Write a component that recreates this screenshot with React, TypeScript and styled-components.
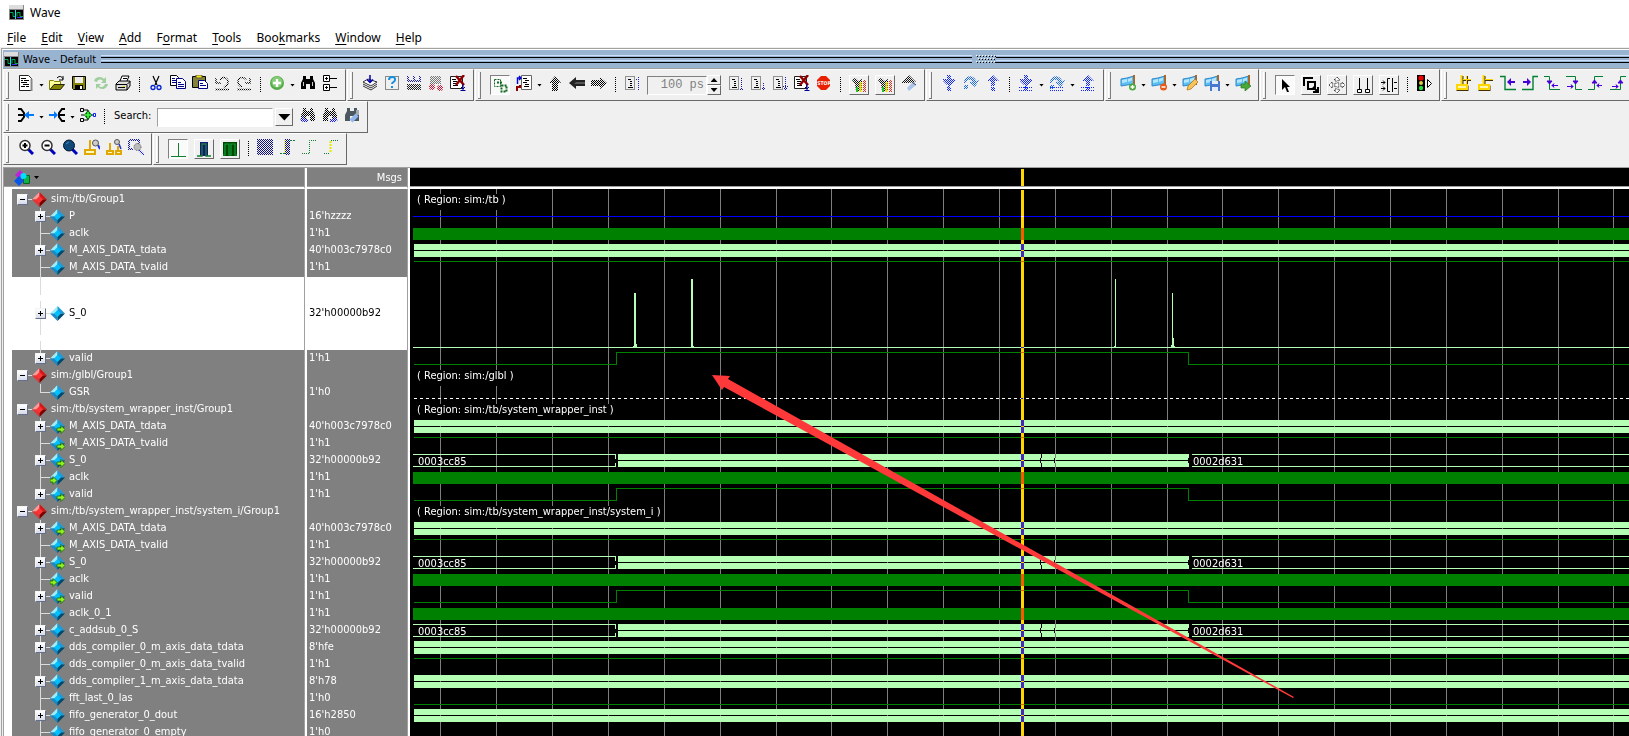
import React from 'react';
import styled, { createGlobalStyle, css } from 'styled-components';

/* ---------- palette ---------- */
const C = {
  face: '#f0f0f0',
  line: '#a0a0a0',
  shade: '#696969',
  caption: '#99b4d1',
  pane: '#808080',
  grid: '#7d7d7d',
  lit: '#b4ffb4',
  green: '#008000',
};
const UI = '"DejaVu Sans Condensed", "Noto Sans", sans-serif';
const MENU = '"Noto Sans", "Noto Sans CJK SC", sans-serif';

const Global = createGlobalStyle`
  *, *::before, *::after { box-sizing: border-box; }
  body { margin: 0; background: ${C.face}; font: 11px/17px ${UI}; color: #000; }
  button, input { font: inherit; color: inherit; margin: 0; padding: 0; border: 0; border-radius: 0; background: none; }
  svg { display: block; flex: none; }
`;

/* ---------- window frame ---------- */
const Window = styled.main`
  display: flex;
  flex-direction: column;
  height: 100vh;
  overflow: hidden;
`;
const TitleBar = styled.header`
  display: flex;
  align-items: center;
  gap: 6px;
  height: 25px;
  padding-left: 9px;
  background: #fff;
  font: 12px/17px ${MENU};
`;
const WindowTitle = styled.h1`
  margin: 0;
  font: inherit;
`;
const MenuBar = styled.nav`
  display: flex;
  gap: 15px;
  height: 23px;
  padding: 4px 7px 0;
  background: #fff;
  border-bottom: 1px solid ${C.face};
  font: 12px/17px ${MENU};
`;
const MenuItem = styled.button`
  height: 17px;
  white-space: nowrap;
  u { text-underline-offset: 2px; }
`;
const Frame = styled.section`
  display: flex;
  flex-direction: column;
  flex: 1;
  min-height: 0;
  margin-left: 1px;
  border: solid ${C.line};
  border-width: 1px 0 0 1px;
`;
const Caption = styled.div`
  display: flex;
  align-items: center;
  gap: 4px;
  flex: none;
  height: 20px;
  margin-left: 1px;
  padding-left: 1px;
  background: ${C.caption};
  border-top: 1px solid #fff;
  border-bottom: 1px solid ${C.line};
`;
const CaptionTitle = styled.h2`
  margin: 0;
  font: inherit;
  white-space: nowrap;
`;
const Rule = styled.span<{ $grow: number }>`
  flex: ${p => p.$grow} 1 0;
  height: 8px;
  margin-left: ${p => (p.$grow > 10 ? 1 : -4)}px;
  background: linear-gradient(
    #cdf 1px, transparent 1px 2px, #000 2px 3px, transparent 3px 5px,
    #cdf 5px 6px, transparent 6px 7px, #000 7px 8px
  );
`;

/* ---------- tool bars ---------- */
const ToolRow = styled.div`
  display: flex;
  flex: none;
  gap: 1px;
  height: 32px;
  margin-left: 1px;
  overflow: hidden;
`;
const Group = styled.div`
  display: flex;
  flex: none;
  align-items: center;
  height: 32px;
  padding-right: 4px;
  border: 1px solid ${C.shade};
  border-top-color: #fff;
  border-left-color: #fff;
  &::before {
    content: '';
    width: 3px;
    height: 27px;
    margin: 0 6px 0 2px;
    border: solid #7c7c7c;
    border-width: 0 1px 1px 0;
    box-shadow: inset 1px 0 #fff;
  }
`;
const Tool = styled.button`
  display: flex;
  justify-content: center;
  width: 22px;
  height: 20px;
`;
const Key = styled.button<{ $down?: boolean }>`
  display: flex;
  align-items: center;
  justify-content: center;
  width: 20px;
  height: 20px;
  margin: 0 3px;
  border: 1px solid;
  border-color: ${p => (p.$down ? '#808080 #fff #fff #808080' : '#fff #696969 #696969 #fff')};
  background: ${p => (p.$down ? '#fafafa' : C.face)};
`;
const DropArrow = styled.button`
  width: 9px;
  height: 20px;
  &::after {
    content: '';
    display: block;
    width: 5px;
    height: 3px;
    margin: 0 2px;
    background: #000;
    clip-path: polygon(0 0, 100% 0, 50% 100%);
  }
`;
const Dots = styled.span`
  width: 11px;
  height: 16px;
  background: repeating-linear-gradient(#000 0 1px, transparent 1px 2px) 5px 0 / 1px 100% no-repeat;
`;
const SearchLabel = styled.label`
  padding: 0 6px 4px 4px;
`;
const SearchBox = styled.input`
  width: 116px;
  height: 19px;
  padding: 0 4px;
  border: 1px solid ${C.line};
  border-color: ${C.line} #fff #fff ${C.line};
  background: #fff;
`;
const SearchDrop = styled(Key)`
  width: 18px;
  height: 18px;
  margin: 0 4px 0 2px;
  &::after {
    content: '';
    width: 13px;
    height: 7px;
    background: #000;
    clip-path: polygon(0 0, 100% 0, 50% 100%);
  }
`;
const RunLength = styled.input`
  width: 60px;
  height: 19px;
  margin-left: 4px;
  padding-right: 2px;
  border: 1px solid;
  border-color: #808080 #fff #fff #808080;
  background: ${C.face};
  color: #808080;
  font: 12px "Liberation Mono", monospace;
  text-align: right;
`;
const Spinner = styled.div`
  display: flex;
  flex-direction: column;
  width: 14px;
  height: 20px;
  margin: 0 4px 0 0;
`;
const SpinKey = styled.button<{ $up?: boolean }>`
  display: flex;
  align-items: center;
  justify-content: center;
  flex: 1;
  border: 1px solid;
  border-color: #fff #696969 #696969 #fff;
  &::after {
    content: '';
    width: 7px;
    height: 4px;
    background: #000;
    clip-path: ${p => (p.$up ? 'polygon(50% 0, 100% 100%, 0 100%)' : 'polygon(0 0, 100% 0, 50% 100%)')};
  }
`;

/* ---------- wave view ---------- */
const Viewer = styled.div`
  position: relative;
  isolation: isolate;
  flex: 1;
  min-height: 0;
  margin: 2px 0 0 1px;
  border: solid ${C.line};
  border-width: 1px 0 0 1px;
  background: #fff;
  overflow: hidden;
`;
const GridLines = styled.svg`
  position: absolute;
  inset: 21px 0 0 406px;
  width: calc(100% - 406px);
  height: calc(100% - 21px);
  background: #000;
`;
const Signals = styled.table`
  position: relative;
  width: 100%;
  table-layout: fixed;
  border-collapse: separate;
  border-spacing: 0;
`;
const NameCol = styled.col` width: 301px; `;
const ValueCol = styled.col` width: 103px; `;
const HeadCell = styled.th<{ $wave?: boolean }>`
  height: 21px;
  padding: 0 5px 0 10px;
  border-bottom: 2px solid #fff;
  box-shadow: inset 0 -1px ${C.line};
  background: ${p => (p.$wave ? '#000' : C.pane)};
  color: #fff;
  font-weight: 400;
  text-align: right;
  & + & { border-left: 2px solid #fff; }
  &:not(:last-child) { border-right: 1px solid ${C.line}; }
`;
const HeadTools = styled.div`
  display: flex;
  align-items: center;
  gap: 2px;
  height: 18px;
  ${DropArrow} { height: 4px; }
`;
const cell = css<{ $h: number; $picked?: boolean }>`
  height: ${p => p.$h}px;
  padding: 0;
  vertical-align: bottom;
  text-align: left;
  font-weight: 400;
`;
const skin = css<{ $picked?: boolean }>`
  background: ${p => (p.$picked ? `linear-gradient(${C.pane} 1px, #fff 1px)` : C.pane)};
  color: ${p => (p.$picked ? '#000' : '#fff')};
  border-right: 1px solid ${C.line};
`;
const NameCell = styled.th<{ $h: number; $picked?: boolean }>`
  ${cell}
  ${skin}
  border-left: 8px solid #fff;
`;
const ValueCell = styled.td<{ $h: number; $picked?: boolean }>`
  ${cell}
  ${skin}
  border-left: 2px solid #fff;
`;
const WaveCell = styled.td<{ $h: number }>`
  ${cell}
  border-left: 2px solid #fff;
`;
const NameLine = styled.div<{ $h: number; $child?: boolean }>`
  display: flex;
  align-items: center;
  height: ${p => p.$h}px;
  padding-left: ${p => (p.$child ? 23 : 5)}px;
  line-height: 16px;
  white-space: nowrap;
`;
const ValueLine = styled.div<{ $h: number }>`
  height: ${p => p.$h}px;
  padding-left: 2px;
  line-height: ${p => p.$h - 1}px;
  white-space: nowrap;
`;
const Branch = styled.span<{ $last?: boolean; $tall?: boolean; $stub?: boolean }>`
  display: flex;
  align-items: center;
  width: 15px;
  height: 100%;
  background:
    linear-gradient(#dcdcdc, #dcdcdc) 100% 50% / ${p => (p.$stub ? 10 : 4)}px 1px no-repeat,
    ${p =>
      p.$tall
        ? `linear-gradient(#dcdcdc 19px, transparent 19px 25px, #dcdcdc 25px 59px, transparent 59px 65px, #dcdcdc 65px)`
        : `linear-gradient(#dcdcdc, #dcdcdc)`}
      5px 0 / 1px ${p => (p.$last ? '50%' : '100%')} no-repeat;
`;
const Root = styled(Branch)`
  background: linear-gradient(#dcdcdc, #dcdcdc) 100% 50% / 4px 1px no-repeat;
`;
const Toggle = styled.button<{ $open?: boolean }>`
  width: 11px;
  height: 11px;
  border: 1px solid;
  border-color: #f4f4f4 #62708c #62708c #f4f4f4;
  background:
    linear-gradient(#000, #000) 50% 50% / 5px 1px no-repeat,
    ${p => (p.$open ? '' : 'linear-gradient(#000, #000) 50% 50% / 1px 5px no-repeat,')}
    linear-gradient(#fff, #d8dce8);
`;
const SignalName = styled.span`
  height: 17px;
  padding-left: 4px;
`;
const Trace = styled.svg`
  width: 100%;
  overflow: hidden;
`;
const Region = styled.div<{ $h: number }>`
  height: ${p => p.$h}px;
  padding: 3px 0 0 6px;
`;
const RegionTag = styled.span`
  display: inline-block;
  height: 16px;
  padding: 0 1px;
  background: #000;
  color: #fff;
  line-height: 12px;
  vertical-align: top;
  white-space: pre;
`;
const Cursor = styled.div<{ $head?: boolean }>`
  position: absolute;
  left: 1017px;
  top: ${p => (p.$head ? 1 : 22)}px;
  bottom: ${p => (p.$head ? 'auto' : 0)};
  width: 3px;
  height: ${p => (p.$head ? '17px' : 'auto')};
  background: #ffd700;
  mix-blend-mode: difference;
`;
const Pointer = styled.svg`
  position: absolute;
  left: 700px;
  top: 200px;
  pointer-events: none;
`;

/* ---------- icon drawings, all on a 16 x 16 grid ---------- */
const dim = { mask: 'url(#dither)' };
const glass = (
  <path d="M10 10l5 5" stroke="#0000c0" strokeWidth="3" fill="none" />
);
const flag = (
  <>
    <path d="M1 4l6-1 7-2v8l-7 1-6 1z" fill="#5cc0f4" />
    <path d="M2 5l5-1v3L2 8zM8 4l4-1.500v3L8 7z" fill="#b4e6ff" />
    <path d="M1 4l6-1 7-2v8l-7 1-6 1z" fill="none" stroke="#2f86c8" />
    <path d="M14 0v10" stroke="#a8682c" strokeWidth="2" />
  </>
);
const page = <path d="M1.500.500h9l3 3v12h-12z" fill="#fff" stroke="#222" />;
const textLines = <path d="M3 3.500h5M3 5.500h2m1 0h5M3 7.500h6M5 9.500h6M3 11.500h4m1 0h3" stroke="#000" fill="none" />;
const dashedDoc = (
  <>
    <path d="M1.500 1.500h9v13h-9z" fill="none" stroke="#333" strokeDasharray="1 1" />
    <path d="M4 4.500h3M6 6.500h2M6 8.500h2M6 10.500h2M4 12.500h5" stroke="#000" fill="none" />
  </>
);
const binoculars = (
  <path d="M3 1h3v3h4V1h3v3l2 4v6h-5V9H6v5H1V8l2-4z" />
);
const reloadArrows = (
  <path d="M1 6c1-5 8-5 10-2l2-2v6H8l2-2C8 4 5 4 4 7zM15 9c-1 6-8 6-10 3l-2 2V9h5l-2 2c2 2 5 1 6-2z" fill="#6cb868" />
);
const marker = (minus: boolean) => (
  <>
    <path d="M6.500 1v10M1.500 11.500h10v4h-10z" fill="none" stroke="#403000" strokeWidth="2" />
    <path d="M5.500 0v10" stroke="#ffd700" strokeWidth="2" />
    <path d="M1 10h10v4H1z" fill="#fff6b0" stroke="#ffd700" strokeWidth="2" />
    <path d={minus ? 'M7 5.500h8' : 'M7 5.500h8M11.500 1v8'} stroke="#403000" />
    <path d={minus ? 'M7 4.500h8' : 'M7 4.500h8M10.500 1v8'} stroke="#ffd700" />
  </>
);
const redX = <path d="M6 1l8 9M14 0L6 10" stroke="#900000" strokeWidth="2.500" fill="none" />;
const arrowTip = (x: number, y: number, d: number) => (
  <path d={`M${x} ${y}l${4 * d} -4v3h${4 * d}v2h${-4 * d}v3z`} fill="#4800d8" />
);
const downBlue = <path d="M6 0h4v4h4v2l-4 4H9v2H7v-2H6L2 6V4h4zM6 12h4v4H6z" fill="#1028ff" />;
const overBlue = <path d="M1 8c0-8 10-9 12-2l3-1-4 7-6-5 3 0c-1-4-6-2-6 1zM1 10h4v4H1z" fill="#1868e8" />;
const upBlue = <path d="M8 0l6 6h-4v5H6V6H2zM6 12h4v4H6z" fill="#1028ff" />;
const rail = <path d="M1 12.500h14M1 15.500h14" stroke="#1028ff" strokeDasharray="1 1" />;

const ICONS: Record<string, React.ReactNode> = {
  wave: (
    <>
      <path d="M0 0h15v15H0z" fill="#888" />
      <path d="M0 0h14v4H0z" fill="#ddd" />
      <path d="M1 5h13v9H1z" />
      <path d="M1 7.500h3v4h2M8 11.500v-4h3v4h3" stroke="#00b050" fill="none" />
      <path d="M6.500 5v9" stroke="#20e0ff" />
      <path d="M8 12.500h5" stroke="#4030ff" />
    </>
  ),
  new: <>{page}{textLines}<path d="M13.500 4v12" stroke="#888" strokeWidth="2" /></>,
  open: (
    <>
      <path d="M.500 14.500v-9h4l1 1h6v3" fill="#ffff9c" stroke="#848400" />
      <path d="M1 14.500l4-5h10.500l-4 5z" fill="#848400" stroke="#000" strokeWidth=".800" />
      <path d="M8 3c3-3 5-1 6 1m0-3v4h-4" fill="none" stroke="#000" />
    </>
  ),
  save: (
    <>
      <path d="M1.500 1.500h13v13h-12l-1-1z" fill="#848400" stroke="#000" />
      <path d="M4 2h8v6H4z" fill="#eee" />
      <path d="M4 10h8v5H4z" />
      <path d="M9 11h2v3H9z" fill="#fff" />
    </>
  ),
  reload: <g opacity=".600">{reloadArrows}</g>,
  print: (
    <>
      <path d="M5 6l2-5h7l-2 5" fill="#fff" stroke="#000" />
      <path d="M1 9l3-3h11v5l-3 4H1z" fill="#ddd" stroke="#000" />
      <path d="M1 9.500h11l3-3M12 10v5M3 12.500h7M8 3.500h4" fill="none" stroke="#000" />
      <path d="M8 11h2v1H8z" fill="#e8d800" />
    </>
  ),
  cut: (
    <>
      <path d="M5 1l4 9M11 1L7 10" stroke="#000" strokeWidth="1.200" />
      <circle cx="5" cy="12.500" r="2" fill="none" stroke="#0020d0" strokeWidth="1.300" />
      <circle cx="11" cy="12.500" r="2" fill="none" stroke="#0020d0" strokeWidth="1.300" />
    </>
  ),
  copy: (
    <>
      <path d="M.500.500h6l2 2v8h-8z" fill="#fff" stroke="#000" />
      <path d="M6.500 3.500h6l3 3v7h-9z" fill="#fff" stroke="#000084" />
      <path d="M2 3.500h3M2 5.500h4M2 7.500h4M8 7.500h3M8 9.500h6M8 11.500h6" stroke="#000084" />
    </>
  ),
  paste: (
    <>
      <path d="M.500 1.500h13v11H.500z" fill="#848438" stroke="#000" />
      <path d="M4 0h6v3H4z" fill="#ffe800" stroke="#555" />
      <path d="M6.500 5.500h6l3 3v5h-9z" fill="#fff" stroke="#000084" />
      <path d="M8 8.500h3M8 10.500h6" stroke="#000084" />
    </>
  ),
  undo: <path d="M2 3v5h5M6 5C8 1 14 2 14 7c0 3-2 4-4 5M1 14.500h14" fill="none" stroke="#000" strokeWidth="1.500" {...dim} />,
  redo: <path d="M14 3v5H9M10 5C8 1 2 2 2 7c0 3 2 4 4 5M1 14.500h14" fill="none" stroke="#000" strokeWidth="1.500" {...dim} />,
  add: (
    <>
      <circle cx="8" cy="8" r="7" fill="#54ac48" />
      <circle cx="8" cy="7" r="5.500" fill="#84cc78" />
      <path d="M8 4v8M4 8h8" stroke="#fff" strokeWidth="2.400" />
    </>
  ),
  find: <>{binoculars}<path d="M3.500 7v4M12.500 7v4" stroke="#ccc" /></>,
  tree: (
    <>
      <path d="M1.500.500h6v6h-6zM1.500 9.500h6v6h-6z" fill="#fff" stroke="#000" />
      <path d="M3 3.500h3M4.500 2v3M3 12.500h3M4.500 11v3M8 3.500h7M8 12.500h7" stroke="#000" />
    </>
  ),
  compile: (
    <>
      <path d="M1 7l5-3 9 3-6 4zM1 9l8 4 6-4M1 11l8 4 6-4" fill="#fff" stroke="#333" />
      <path d="M8 0v7M5 4.500l3 3 3-3" fill="none" stroke="#0000b0" strokeWidth="1.500" />
    </>
  ),
  compileAsk: (
    <>
      <path d="M1.500 1.500h13v13h-13z" fill="none" stroke="#222" strokeDasharray="1 1" />
      <path d="M5 5c0-4 7-4 6 0 0 2-3 2-3 4M8 11v2" fill="none" stroke="#1890e0" strokeWidth="2" />
    </>
  ),
  compileAll: (
    <>
      <path d="M1 9h14v6H1z" fill="#222" {...dim} />
      <path d="M1 1h2v4h4V1h2v4h4V1h2v6H1z" fill="#2020a0" {...dim} />
    </>
  ),
  simulate: (
    <>
      <path d="M2 1h11v8H2z" fill="#777" {...dim} />
      <circle cx="4" cy="12" r="3" fill="#d01030" {...dim} />
      <circle cx="12" cy="13" r="3" fill="#d01030" {...dim} />
    </>
  ),
  abort: (
    <>
      <path d="M.500 1.500h12v12h-12z" fill="#fff" stroke="#222" />
      <path d="M2 4.500h4M3 6.500h4M3 8.500h3M3 10.500h5" stroke="#000" />
      {redX}
      <path d="M13 9v6M10.500 15.500h5M11 12l2 2 2-2" stroke="#0000a0" fill="none" />
    </>
  ),
  link: (
    <>
      <path d="M2.500 2.500h6v7h-6z" fill="none" stroke="#106820" strokeDasharray="2 1" />
      <path d="M5 5.500h6M9.500 8.500h5v6h-5z" fill="none" stroke="#106820" strokeWidth="2" strokeDasharray="2 1" />
    </>
  ),
  restart: (
    <>
      <path d="M5.500.500h10v14h-10z" fill="#fff" stroke="#666" />
      <path d="M7 3.500h4M9 5.500h4M7 7.500h4M9 9.500h4M8 11.500h5" stroke="#000" />
      <path d="M1.500 9V3H5M3 1l2 2-2 2" fill="none" stroke="#0000d8" strokeWidth="1.400" />
      <path d="M4 10v2H1v4" fill="none" stroke="#900000" strokeWidth="2" />
    </>
  ),
  up: <path d="M8 1l6 7h-3v8H5V8H2z" fill="#000" {...dim} />,
  back: (
    <>
      <path d="M0 8l7-6v3h9v6H7v3z" fill="#222" />
      <path d="M7 7h9v2H5z" fill="#555" />
    </>
  ),
  forward: <path d="M16 8L9 2v3H0v6h9v3z" fill="#000" {...dim} />,
  runUp: <>{dashedDoc}<path d="M14.500 15V2M12 4.500h5" stroke="#2020b0" fill="none" strokeDasharray="1 1" /></>,
  runStep: <>{dashedDoc}<path d="M13.500 3v12M12 14.500h4" stroke="#1818a0" fill="none" strokeDasharray="1 1" /></>,
  runNext: <>{dashedDoc}<path d="M13.500 8v7M12 13.500h4" stroke="#1818a0" fill="none" strokeDasharray="1 1" /></>,
  runAll: <>{dashedDoc}<path d="M13.500 2v13M11 11.500h5M12 13.500h4" stroke="#1818a0" fill="none" strokeDasharray="1 1" /></>,
  stop: (
    <>
      <path d="M5 1h5l4 4v6l-4 4H5l-4-4V5z" fill="#e82000" />
      <text x="8" y="10" fontSize="5" fontWeight="700" textAnchor="middle" fill="#fff">STOP</text>
    </>
  ),
  profile: (
    <>
      <path d="M1 3c2-3 5-2 6 1l4-2v12H5L4 7z" fill="#111" {...dim} />
      <path d="M6 10v5" stroke="#20c030" strokeWidth="2" />
      <path d="M9.500 5v10" stroke="#e8e000" strokeWidth="2" />
      <path d="M13.500 3v12" stroke="#e03020" strokeWidth="3" {...dim} />
    </>
  ),
  broom: (
    <>
      <path d="M0 8l8-8 7 7-8 1z" fill="#111" {...dim} />
      <path d="M6 13l6-6 3 3-7 6z" fill="#a8c4e8" />
      <path d="M11 7l4 3" stroke="#445" />
    </>
  ),
  stepIn: <g {...dim}>{downBlue}</g>,
  stepOver: <g {...dim}>{overBlue}</g>,
  stepOut: <g {...dim}>{upBlue}</g>,
  stepInRail: <g><g {...dim}>{downBlue}</g>{rail}</g>,
  stepOverRail: <g><g {...dim}>{overBlue}</g>{rail}</g>,
  stepOutRail: <g><g {...dim}>{upBlue}</g>{rail}</g>,
  flagAdd: <>{flag}<circle cx="12.500" cy="12" r="3.500" fill="#4ca838" /><path d="M12.500 10v4M10.500 12h4" stroke="#fff" strokeWidth="1.500" /></>,
  flagDel: <>{flag}<circle cx="12.500" cy="12" r="3.500" fill="#e85818" /><path d="M10.500 12h4" stroke="#fff" strokeWidth="1.500" /></>,
  flagEdit: <>{flag}<path d="M5 15l1-4 7-7 3 3-7 7z" fill="#f8c458" stroke="#b07820" strokeWidth=".800" /></>,
  flagSave: <>{flag}<path d="M6 6h10v10H6z" fill="#4878d0" /><path d="M8 6h6v3H8zM8 12h6v4H8z" fill="#e4ecf8" /></>,
  flagGo: <>{flag}<path d="M6 9h4V6l6 5-6 5v-3H6z" fill="#48a838" stroke="#2c7820" strokeWidth=".700" /></>,
  select: <path d="M5 2v11l3-3 2 5h2l-2-5h3z" />,
  zoomMode: (
    <path d="M1 9V1h9M5 5h7v7H5zM10 10l5 5M15 10v5h-5" fill="none" stroke="#000" strokeWidth="2" />
  ),
  pan: (
    <path
      d="M8 0l3 3H9v4h4V5l3 3-3 3V9H9v4h2l-3 3-3-3h2V9H3v2L0 8l3-3v2h4V3H5z"
      fill="#fff" stroke="#000" strokeWidth="1" strokeDasharray="1 1"
    />
  ),
  twoCursor: <path d="M4.500 1v11M2.500 12.500h4v3h-4zM12.500 1v11M10.500 12.500h4v3h-4z" fill="#fff" stroke="#000" />,
  edit: (
    <path d="M0 5.500h4M2 3.500l2 2-2 2M0 11.500h4M2 9.500l2 2-2 2M9 1.500H6.500v13H9M11.500 1v14M13 5.500h3M13 11.500h3" fill="none" stroke="#000" />
  ),
  traffic: (
    <>
      <path d="M1 0h8v16H1z" />
      <circle cx="5" cy="3" r="2.600" fill="#f00000" />
      <circle cx="5" cy="8" r="2" fill="#d8d040" />
      <circle cx="5" cy="13" r="2.200" fill="#20e040" />
      <path d="M11.500 4.500v8l4-4z" fill="#fff" stroke="#000" />
    </>
  ),
  markAdd: marker(false),
  markDel: marker(true),
  edgePrev: <><path d="M0 1.500h5v13h11" fill="none" stroke="#008030" strokeWidth="1.400" />{arrowTip(7, 7, 1)}</>,
  edgeNext: <><path d="M0 14.500h11v-13h5" fill="none" stroke="#008030" strokeWidth="1.400" />{arrowTip(9, 7, -1)}</>,
  fallPrev: <><path d="M0 1.500h5.500v13H16" fill="none" stroke="#008030" /><path d="M3 6h5L5.500 9zM14 10.500H8m2-2l-2 2 2 2" fill="#4800d8" stroke="#4800d8" /></>,
  fallNext: <><path d="M0 1.500h9.500v13H16" fill="none" stroke="#008030" /><path d="M7 6h5L9.500 9zM1 11.500h6m-2-2l2 2-2 2" fill="#4800d8" stroke="#4800d8" /></>,
  risePrev: <><path d="M0 14.500h6.500v-13H15" fill="none" stroke="#008030" /><path d="M4 8h5L6.500 5zM14 10.500H9m2-2l-2 2 2 2" fill="#4800d8" stroke="#4800d8" /></>,
  riseNext: <><path d="M0 14.500h10.500v-13H16" fill="none" stroke="#008030" /><path d="M8 8h5l-2.500-3zM2 11.500h6m-2-2l2 2-2 2" fill="#4800d8" stroke="#4800d8" /></>,
  mergeIn: <><path d="M0 2h3l3 4v4l-3 4H0M0 8h5" fill="none" stroke="#000" strokeWidth="2" /><path d="M6 8l5-4v3h5v2h-5v3z" fill="#0078ff" /></>,
  mergeOut: <><path d="M16 2h-3l-3 4v4l3 4h3M11 8h5" fill="none" stroke="#000" strokeWidth="2" /><path d="M9 8L5 4v3H0v2h5v3z" fill="#0078ff" /></>,
  expand: (
    <>
      <path d="M.500 1.500h3v3h-3zM.500 11.500h3v3h-3zM4 3h4v10H4M1 8h3M11 8h2" fill="none" stroke="#000" />
      <path d="M8 3l4 5-4 5-4-5z" fill="#006800" />
      <path d="M8 5v6M5 8h6" stroke="#40ff40" strokeWidth="1.500" />
      <path d="M13.500 6.500h2v3h-2z" fill="#fff" stroke="#0020ff" />
    </>
  ),
  findPrev: <><g {...dim}>{binoculars}</g><path d="M0 13l4-4v3h4v3H3z" fill="#1018ff" {...dim} /></>,
  findNext: <><g {...dim}>{binoculars}</g><path d="M16 13l-4-4v3H8v3h5z" fill="#1018ff" {...dim} /></>,
  findOpts: <><g fill="#4c5860">{binoculars}</g><path d="M7 14l6-6" stroke="#90b8ec" strokeWidth="4" /><path d="M12 3h3v5h-3z" fill="#a0acb4" /></>,
  zoomIn: <>{glass}<circle cx="7" cy="6.500" r="5" fill="#fff" stroke="#333" strokeWidth="1.500" /><path d="M7 4v5M4.500 6.500h5" stroke="#000" strokeWidth="2" /></>,
  zoomOut: <>{glass}<circle cx="7" cy="6.500" r="5" fill="#fff" stroke="#333" strokeWidth="1.500" /><path d="M4.500 6.500h5" stroke="#000" strokeWidth="2" /></>,
  zoomFull: <>{glass}<circle cx="7" cy="6.500" r="5.500" fill="#104878" stroke="#001830" /><path d="M4 5l3-2" stroke="#4890c8" /></>,
  zoomCursor: (
    <>
      <path d="M6 1v10M1 11h10v4H1z" fill="#fff8c0" stroke="#e0a800" strokeWidth="2" />
      <path d="M14 6l2 4" stroke="#2030e0" strokeWidth="2" /><circle cx="11.500" cy="4" r="3" fill="#ccc" stroke="#555" />
    </>
  ),
  zoomBetween: (
    <>
      <path d="M4 4v7M1 12h6v3H1zM12 7v4M10 12h5v3h-5z" fill="#fff8c0" stroke="#e0a800" strokeWidth="2" />
      <path d="M13 5l2 5" stroke="#2030e0" strokeWidth="1.500" /><circle cx="11" cy="3" r="2.500" fill="#ccc" stroke="#555" />
    </>
  ),
  zoomArea: (
    <>
      <path d="M1 1h10v4M1 1v9h4" fill="none" stroke="#1018b0" strokeWidth="2" {...dim} />
      <path d="M11 11l5 5" stroke="#1018ff" strokeWidth="2" {...dim} />
      <circle cx="9.500" cy="8" r="3.500" fill="#bbb" stroke="#555" strokeDasharray="1 1" />
    </>
  ),
  levelOne: <path d="M1 15.500h15M8.500 2v13" stroke="#108030" fill="none" />,
  levelBox: <><path d="M4 1h8v14H4z" fill="#181878" /><path d="M1 15h5V3h4v12h5" fill="none" stroke="#108030" strokeWidth="1.400" /></>,
  levelAll: <><path d="M1 1h14v14H1z" fill="#004800" /><path d="M1 14h2V3h4v11h2V3h4v11h2" fill="none" stroke="#10a038" strokeWidth="1.200" /></>,
  dimBox: <path d="M0 0h16v16H0z" fill="#101080" {...dim} />,
  dimEdgeBar: <><path d="M6 0h5v16H6z" fill="#101080" {...dim} /><path d="M5.500 1v14" stroke="#e8e800" strokeDasharray="1 1" /><path d="M1 14.500h5M11 1.500h5" stroke="#108030" strokeDasharray="2 1" /></>,
  dimEdge: <path d="M1 14.500h7.500v-13H15" fill="none" stroke="#108030" strokeDasharray="1 1" />,
  dimEdgeHot: <><path d="M7.500 2v12" stroke="#e8e800" strokeDasharray="2 1" strokeWidth="2" /><path d="M1 14.500h5M8 1.500h7" stroke="#108030" strokeDasharray="1 1" /></>,
  shapes: (
    <>
      <path d="M1 5l5-5 5 5-5 5z" fill="#c020d8" />
      <path d="M9.500 5.500h6v8h-6z" fill="#10b048" stroke="#086020" />
      <path d="M0 11l5-5 5 5-5 5z" fill="#0858e8" />
      <circle cx="9.500" cy="6" r="3" fill="#00e0ff" />
    </>
  ),
};
const Icon = ({ name, size = 16 }: { name: string; size?: number }) => (
  <svg width={size} height={size} viewBox={`0 0 ${size} ${size}`} aria-hidden="true">{ICONS[name]}</svg>
);

const Dither = () => (
  <svg width="0" height="0" aria-hidden="true">
    <defs>
      <pattern id="checks" width="2" height="2" patternUnits="userSpaceOnUse">
        <path d="M0 0h1v1H0zM1 1h1v1H1z" fill="#fff" shapeRendering="crispEdges" />
      </pattern>
      <mask id="dither" maskUnits="userSpaceOnUse" x="0" y="0" width="17" height="17">
        <rect width="17" height="17" fill="url(#checks)" />
      </mask>
    </defs>
  </svg>
);

/* '|' is a separator, 'v' a drop arrow, '[x]' a raised key, '(x)' a pressed key */
const Tools = ({ of }: { of: string }) => (
  <>
    {of.split(' ').map((t, i) => {
      if (t === '|') return <Dots key={i} />;
      if (t === 'v') return <DropArrow key={i} aria-label="More" />;
      const name = t.replace(/[^\w]/g, '');
      if (t[0] === '[' || t[0] === '(')
        return <Key key={i} $down={t[0] === '('} aria-label={name}><Icon name={name} /></Key>;
      return <Tool key={i} aria-label={name}><Icon name={name} /></Tool>;
    })}
  </>
);

/* ---------- signal rows ---------- */
type Kind = 'region' | 'z' | 'clock' | 'busy' | 'high' | 'low' | 'unknown' | 'pulse' | 'bus' | 'analog';
type Port = 'in' | 'out' | undefined;
type Row = { name: string; value?: string; kind: Kind; plus?: boolean; port?: Port; last?: boolean; label?: string; h?: number };
const group = (name: string, label: string, h?: number): Row => ({ name, kind: 'region', label, h });
const sig = (name: string, value: string, kind: Kind, plus = false, port?: Port, last = false): Row =>
  ({ name, value, kind, plus, port, last });

const ROWS: Row[] = [
  group('sim:/tb/Group1', '( Region: sim:/tb )', 19),
  sig('P', "16'hzzzz", 'z', true),
  sig('aclk', "1'h1", 'clock'),
  sig('M_AXIS_DATA_tdata', "40'h003c7978c0", 'busy', true),
  sig('M_AXIS_DATA_tvalid', "1'h1", 'high'),
  { ...sig('S_0', "32'h00000b92", 'analog', true), h: 74 },
  sig('valid', "1'h1", 'pulse', true, undefined, true),
  group('sim:/glbl/Group1', '( Region: sim:/glbl )'),
  sig('GSR', "1'h0", 'unknown', false, undefined, true),
  group('sim:/tb/system_wrapper_inst/Group1', '( Region: sim:/tb/system_wrapper_inst )'),
  sig('M_AXIS_DATA_tdata', "40'h003c7978c0", 'busy', true, 'out'),
  sig('M_AXIS_DATA_tvalid', "1'h1", 'high', false, 'out'),
  sig('S_0', "32'h00000b92", 'bus', true, 'out'),
  sig('aclk', "1'h1", 'clock', false, 'in'),
  sig('valid', "1'h1", 'pulse', true, 'out', true),
  group('sim:/tb/system_wrapper_inst/system_i/Group1', '( Region: sim:/tb/system_wrapper_inst/system_i )'),
  sig('M_AXIS_DATA_tdata', "40'h003c7978c0", 'busy', true, 'out'),
  sig('M_AXIS_DATA_tvalid', "1'h1", 'high', false, 'out'),
  sig('S_0', "32'h00000b92", 'bus', true, 'out'),
  sig('aclk', "1'h1", 'clock', false, 'in'),
  sig('valid', "1'h1", 'pulse', true, 'out'),
  sig('aclk_0_1', "1'h1", 'clock'),
  sig('c_addsub_0_S', "32'h00000b92", 'bus', true),
  sig('dds_compiler_0_m_axis_data_tdata', "8'hfe", 'busy', true),
  sig('dds_compiler_0_m_axis_data_tvalid', "1'h1", 'high'),
  sig('dds_compiler_1_m_axis_data_tdata', "8'h78", 'busy', true),
  sig('fft_last_0_las', "1'h0", 'low'),
  sig('fifo_generator_0_dout', "16'h2850", 'busy', true),
  sig('fifo_generator_0_empty', "1'h0", 'low'),
];

const Diamond = ({ red, port }: { red?: boolean; port?: Port }) => {
  const [a, b, c, d, e] = red
    ? ['#ff9a9a', '#d41818', '#e43434', '#7c0000', '#ff3434']
    : ['#a0ecf8', '#1c9cd8', '#1c88c4', '#00486c', '#00c0ff'];
  return (
    <svg width="15" height="15" aria-hidden="true">
      <path d="M7.500 0v7.500H0z" fill={a} />
      <path d="M7.500 0v7.500H15z" fill={b} />
      <path d="M0 7.500h7.500V15z" fill={c} />
      <path d="M15 7.500H7.500V15z" fill={d} />
      <path d="M7.500 4L11 7.500 7.500 11 4 7.500z" fill={e} />
      {port && (
        <path
          d={port === 'out' ? 'M7 9h4V6.500l4 4-4 4V12H7z' : 'M0 9h3V6.500l4 4-4 4V12H0z'}
          fill="#90f020" stroke="#1c6800" strokeWidth=".800"
        />
      )}
    </svg>
  );
};

const busText = { fill: '#fff', fontSize: 11 };
const Wave = ({ kind, h }: { kind: Kind; h: number }) => {
  const shapes: Partial<Record<Kind, React.ReactNode>> = {
    z: <rect x="3" y="8" width="100%" height="1" fill="#00f" />,
    clock: <rect x="3" y="3" width="100%" height="12" fill={C.green} />,
    busy: (
      <>
        <rect x="4" y="2" width="100%" height="6" fill={C.lit} />
        <rect x="4" y="9" width="100%" height="6" fill={C.lit} />
      </>
    ),
    high: <rect x="4" y="2" width="100%" height="1" fill={C.green} />,
    low: <rect x="4" y="14" width="100%" height="1" fill={C.green} />,
    unknown: <path d="M4 14.500h4000" stroke="#fff" strokeDasharray="3 3" />,
    pulse: <path d="M4 14.500h202.500v-12h572v12h4000" fill="none" stroke={C.green} />,
    analog: (
      <>
        <path d="M3 71.500h4000" stroke={C.lit} />
        <path
          d="M224 17h2v51h1v3h-4v-1h1zM281 3h2v67h1v1h-3zM705 3h1v68h-2v-1h1zM762 17h1v45h1v8h1v1h-4v-2h1z"
          fill={C.lit}
        />
      </>
    ),
    bus: (
      <>
        <path d="M3 2.500h202.500v4M3 14.500h202.500v-4" fill="none" stroke={C.lit} />
        <path d="M208 2h571v4h-1v2H208zM208 9h570v2h1v4H208z" fill={C.lit} />
        <path d="M782 2.500h4000M782 14.500h4000" stroke={C.lit} />
        <path d="M631 2h1v4h-1zM630 6h1v5h-1zM631 11h1v4h-1zM644 6h1v5h-1z" />
        <path d="M645 2h1v4h-1zM645 11h1v4h-1z" fill={C.grid} />
        <path d="M779 3h1v11h-1z" />
        <text x="8" y="13" {...busText}>0003cc85</text>
        <text x="783" y="13" {...busText}>0002d631</text>
      </>
    ),
  };
  return <Trace height={h} shapeRendering="crispEdges" aria-hidden="true">{shapes[kind]}</Trace>;
};

const SignalRow = ({ row }: { row: Row }) => {
  const h = row.h ?? 17;
  const tall = h > 19;
  const inner = tall ? h : 17;
  const isGroup = row.kind === 'region';
  return (
    <tr>
      <NameCell scope="row" $h={h} $picked={tall}>
        <NameLine $h={inner} $child={!isGroup}>
          {isGroup ? (
            <Root><Toggle $open aria-label={`Collapse ${row.name}`} /></Root>
          ) : (
            <Branch $last={row.last} $tall={tall} $stub={!row.plus}>
              {row.plus && <Toggle aria-label={`Expand ${row.name}`} />}
            </Branch>
          )}
          <Diamond red={isGroup} port={row.port} />
          <SignalName>{row.name}</SignalName>
        </NameLine>
      </NameCell>
      <ValueCell $h={h} $picked={tall}>
        <ValueLine $h={inner}>{row.value}</ValueLine>
      </ValueCell>
      <WaveCell $h={h}>
        {isGroup ? <Region $h={inner}><RegionTag>{row.label}</RegionTag></Region> : <Wave kind={row.kind} h={inner} />}
      </WaveCell>
    </tr>
  );
};

const MENUS: [string, string, string][] = [
  ['', 'F', 'ile'], ['', 'E', 'dit'], ['', 'V', 'iew'], ['', 'A', 'dd'], ['F', 'o', 'rmat'],
  ['', 'T', 'ools'], ['Boo', 'k', 'marks'], ['', 'W', 'indow'], ['', 'H', 'elp'],
];
const TICKS = Array.from({ length: 60 }, (_, i) => Math.round(30.4 + i * 55.86));

export default function App() {
  return (
    <Window>
      <Global />
      <TitleBar>
        <Icon name="wave" size={15} />
        <WindowTitle>Wave</WindowTitle>
      </TitleBar>
      <MenuBar>
        {MENUS.map(([a, k, b]) => <MenuItem key={k + b}>{a}<u>{k}</u>{b}</MenuItem>)}
      </MenuBar>
      <Frame>
        <Caption>
          <Icon name="wave" size={15} />
          <CaptionTitle>Wave - Default</CaptionTitle>
          <Rule $grow={11} />
          <svg width="20" height="8" aria-hidden="true" shapeRendering="crispEdges">
            <path d="M0 .500h20M2 3.500h18M0 6.500h20" stroke="#fff" strokeDasharray="1 2" />
            <path d="M1 1.500h19M3 4.500h17M1 7.500h19" stroke="#000" strokeDasharray="1 2" />
          </svg>
          <Rule $grow={8} />
        </Caption>
        <ToolRow>
          <Group><Tools of="new v open save reload print | cut copy paste undo redo | add v find tree" /></Group>
          <Group><Tools of="compile compileAsk compileAll simulate abort" /></Group>
          <Group>
            <Tools of="(link) restart v up back forward | runUp" />
            <RunLength defaultValue="100 ps" disabled aria-label="Run length" />
            <Spinner>
              <SpinKey $up aria-label="Longer" />
              <SpinKey aria-label="Shorter" />
            </Spinner>
            <Tools of="runStep runNext runAll abort stop | [profile] [profile] broom" />
          </Group>
          <Group><Tools of="stepIn stepOver stepOut | stepInRail v stepOverRail v stepOutRail" /></Group>
          <Group><Tools of="flagAdd v flagDel v flagEdit flagSave v flagGo" /></Group>
          <Group><Tools of="(select) [zoomMode] [pan] [twoCursor] [edit] | traffic" /></Group>
          <Group><Tools of="markAdd markDel edgePrev edgeNext fallPrev fallNext risePrev riseNext" /></Group>
        </ToolRow>
        <ToolRow>
          <Group>
            <Tools of="mergeIn v mergeOut v expand |" />
            <SearchLabel htmlFor="search">Search:</SearchLabel>
            <SearchBox id="search" />
            <SearchDrop aria-label="Search history" />
            <Tools of="findPrev findNext findOpts" />
          </Group>
        </ToolRow>
        <ToolRow>
          <Group><Tools of="zoomIn zoomOut zoomFull zoomCursor zoomBetween zoomArea" /></Group>
          <Group><Tools of="(levelOne) [levelBox] [levelAll] | dimBox dimEdgeBar dimEdge dimEdgeHot" /></Group>
        </ToolRow>
        <Viewer>
          <GridLines shapeRendering="crispEdges" aria-hidden="true">
            {TICKS.map(x => <rect key={x} x={x} width="1" height="100%" fill={C.grid} />)}
          </GridLines>
          <Signals>
            <colgroup><NameCol /><ValueCol /><col /></colgroup>
            <thead>
              <tr>
                <HeadCell scope="col">
                  <HeadTools><Icon name="shapes" /><DropArrow aria-label="Columns" /></HeadTools>
                </HeadCell>
                <HeadCell scope="col">Msgs</HeadCell>
                <HeadCell scope="col" $wave />
              </tr>
            </thead>
            <tbody>{ROWS.map((row, i) => <SignalRow key={i} row={row} />)}</tbody>
          </Signals>
          <Cursor $head />
          <Cursor />
          <Pointer width="600" height="340" aria-hidden="true">
            <path d="M8 7l18 1-2 3 566 318-1 1-569-311-2 3z" fill="#ff3939" />
          </Pointer>
        </Viewer>
      </Frame>
      <Dither />
    </Window>
  );
}
